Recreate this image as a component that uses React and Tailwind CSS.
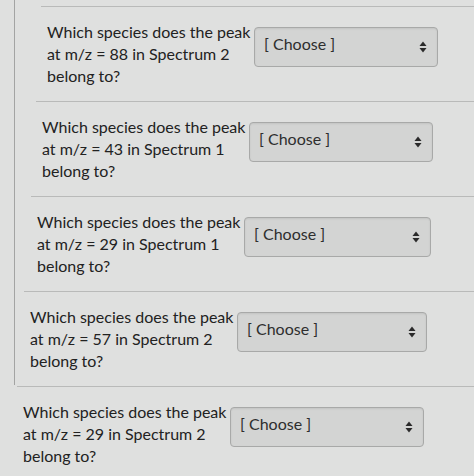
import React from 'react';

const QUESTIONS = [
    { mz: 88, spectrum: 2, offset: 'pl-[26px]', selectW: 'w-[184px]' },
    { mz: 43, spectrum: 1, offset: 'pl-[21px]', selectW: 'w-[184px]' },
    { mz: 29, spectrum: 1, offset: 'pl-[16px]', selectW: 'w-[187px]' },
    { mz: 57, spectrum: 2, offset: 'pl-[9px]', selectW: 'w-[190px]' },
    { mz: 29, spectrum: 2, offset: 'pl-[2px]', selectW: 'w-[194px]' },
];

// Up/down arrows used by the native-looking select
const SortArrows = () => (
    <svg width="8" height="12" viewBox="0 0 8 12" className="text-[#2a2a2a]">
        <path d="M4 0.5 L7.5 5 H0.5 Z" fill="currentColor" />
        <path d="M4 11.5 L7.5 7 H0.5 Z" fill="currentColor" />
    </svg>
);

const QuestionRow = ({ question, isFirst }) => (
    <div className={`${question.offset} ${isFirst ? 'pt-[6px]' : ''}`}>
        <div className="border-t border-[#b9bab9] h-[95px] flex items-start pl-[6px] pt-[14px]">
            <p className="w-[206px] shrink-0 text-[16px] leading-[22px] text-[#222222]">
                {`Which species does the peak at m/z = ${question.mz} in Spectrum ${question.spectrum} belong to?`}
            </p>
            <div
                className={`${question.selectW} h-[40px] mt-[6px] ml-[1px] rounded-[4px] border border-[#a8a9a8] bg-[#d3d4d3] shadow-[inset_0_1px_2px_rgba(0,0,0,0.08)] flex items-start justify-between pl-[9px] pr-[10px]`}
            >
                <span className="text-[16px] leading-[20px] mt-[6px] text-[#2e2e2e]">[ Choose ]</span>
                <span className="mt-[13px]">
                    <SortArrows />
                </span>
            </div>
        </div>
    </div>
);

export default function App() {
    return (
        <div
            className="w-[474px] h-[476px] overflow-hidden bg-[#dfe0df] flex"
            style={{ fontFamily: 'Lato, "Open Sans", sans-serif' }}
        >
            <div className="w-[15px] shrink-0 h-[385px] border-r border-[#a3a4a3]" />
            <div className="flex flex-col flex-1">
                {QUESTIONS.map((q, i) => (
                    <QuestionRow key={i} question={q} isFirst={i === 0} />
                ))}
            </div>
        </div>
    );
}
